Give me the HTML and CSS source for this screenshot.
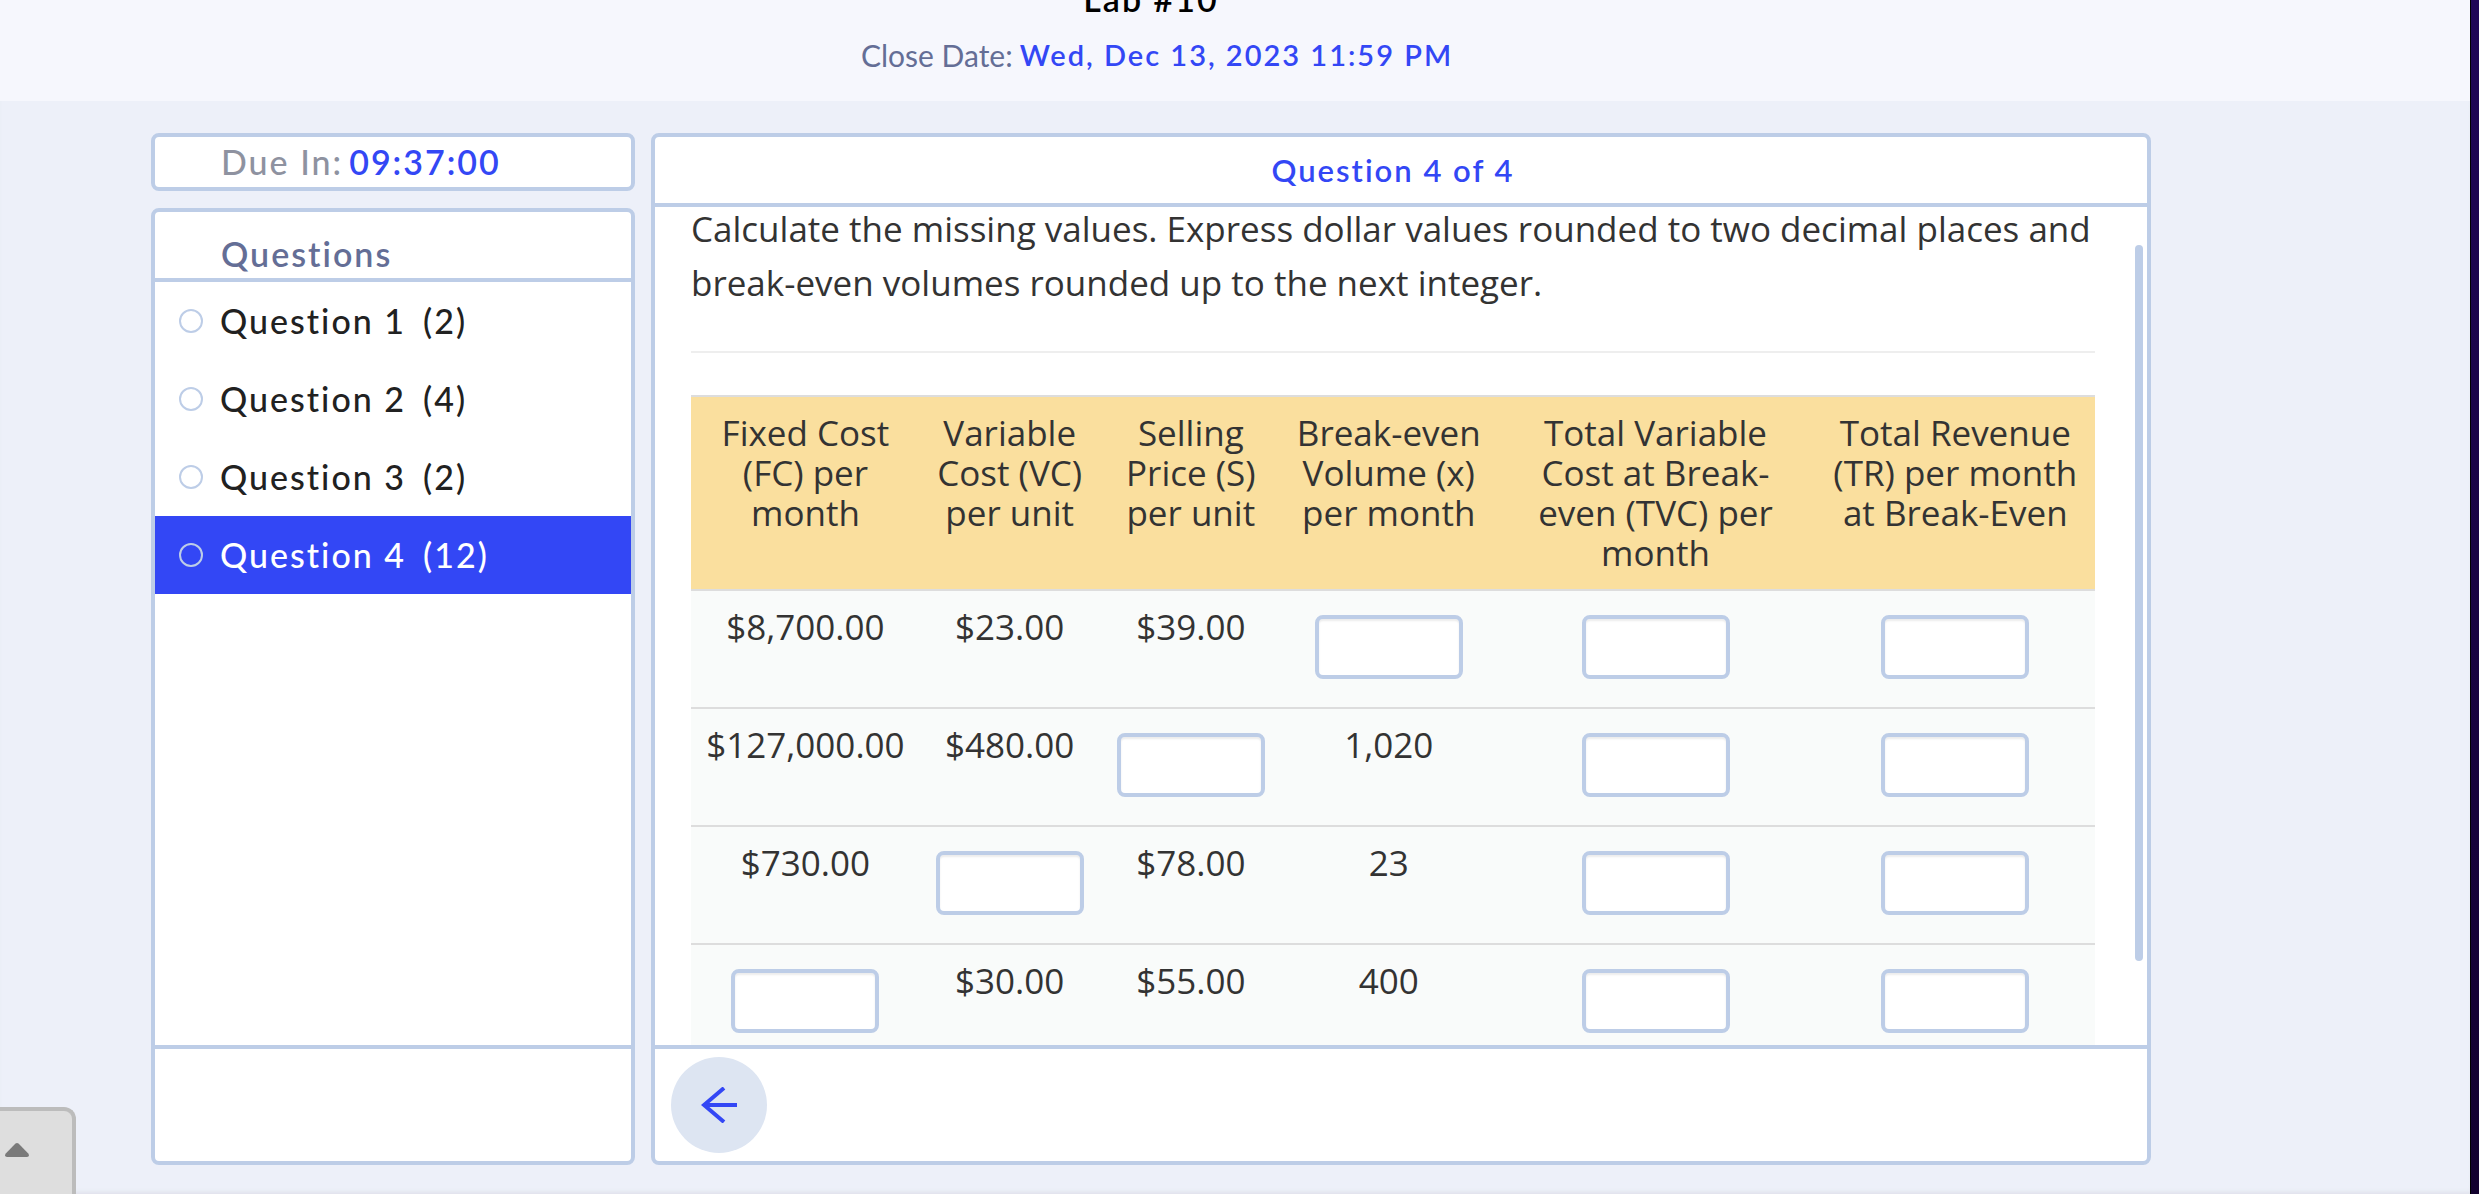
FILE: index.html
```html
<!DOCTYPE html>
<html lang="en">
<head>
<meta charset="utf-8">
<title>Lab #10</title>
<link rel="stylesheet" href="styles.css">
</head>

<body>
<div class="page">
	<header class="top">
		<h1>Lab #10</h1>
		<p class="close-date">Close Date: <span>Wed, Dec 13, 2023 11:59 PM</span></p>
	</header>

	<div class="content">
		<aside class="side">
			<div class="box due">Due In: <span>09:37:00</span></div>

			<nav class="box questions">
				<h2>Questions</h2>
				<ul>
					<li><a href="#q1"><i class="dot"></i><span>Question 1</span><span>(2)</span></a></li>
					<li><a href="#q2"><i class="dot"></i><span>Question 2</span><span>(4)</span></a></li>
					<li><a href="#q3"><i class="dot"></i><span>Question 3</span><span>(2)</span></a></li>
					<li><a href="#q4" class="active"><i class="dot"></i><span>Question 4</span><span>(12)</span></a></li>
				</ul>
				<div class="box-foot"></div>
			</nav>
		</aside>

		<main class="box question">
			<h2>Question 4 of 4</h2>
			<div class="scroll">
				<div class="scroll-content">
					<p class="task">Calculate the missing values. Express dollar values rounded to two decimal places and break-even volumes rounded up to the next integer.</p>
					<hr>
					<table>
						<colgroup>
							<col class="c-fc"><col class="c-vc"><col class="c-s"><col class="c-x"><col class="c-tvc"><col class="c-tr">
						</colgroup>
						<thead>
							<tr>
								<th>Fixed Cost (FC) per month</th>
								<th>Variable Cost (VC) per unit</th>
								<th>Selling Price (S) per unit</th>
								<th>Break-even Volume (x) per month</th>
								<th>Total Variable Cost at Break-even (TVC) per month</th>
								<th>Total Revenue (TR) per month at Break-Even</th>
							</tr>
						</thead>
						<tbody>
							<tr>
								<td>$8,700.00</td>
								<td>$23.00</td>
								<td>$39.00</td>
								<td><input type="text" aria-label="Row 1 break-even volume"></td>
								<td><input type="text" aria-label="Row 1 total variable cost"></td>
								<td><input type="text" aria-label="Row 1 total revenue"></td>
							</tr>
							<tr>
								<td>$127,000.00</td>
								<td>$480.00</td>
								<td><input type="text" aria-label="Row 2 selling price"></td>
								<td>1,020</td>
								<td><input type="text" aria-label="Row 2 total variable cost"></td>
								<td><input type="text" aria-label="Row 2 total revenue"></td>
							</tr>
							<tr>
								<td>$730.00</td>
								<td><input type="text" aria-label="Row 3 variable cost"></td>
								<td>$78.00</td>
								<td>23</td>
								<td><input type="text" aria-label="Row 3 total variable cost"></td>
								<td><input type="text" aria-label="Row 3 total revenue"></td>
							</tr>
							<tr>
								<td><input type="text" aria-label="Row 4 fixed cost"></td>
								<td>$30.00</td>
								<td>$55.00</td>
								<td>400</td>
								<td><input type="text" aria-label="Row 4 total variable cost"></td>
								<td><input type="text" aria-label="Row 4 total revenue"></td>
							</tr>
						</tbody>
					</table>
				</div>
				<div class="thumb"></div>
			</div>
			<div class="box-foot">
				<button type="button" class="back" aria-label="Previous question">
					<svg width="36" height="36" viewBox="0 0 36 36" fill="none" stroke="#3347f5" stroke-width="4">
						<path d="M36 18H3M23 1L3 18l20 17"/>
					</svg>
				</button>
			</div>
		</main>
	</div>

	<button type="button" class="tab" aria-label="Expand">
		<svg width="24" height="14" viewBox="0 0 24 14" fill="#7a7a7a">
			<path d="M10.500.6q1.500-1.200 3 0l10 10.200q1.300 3-1.500 3.200H2q-2.800-.2-1.500-3.200z"/>
		</svg>
	</button>
</div>
<!-- desktop behind the window -->
<div class="desktop"></div>
</body>
</html>
```

FILE: styles.css
```css
*{ margin:0; padding:0; box-sizing:border-box;}
ul{ list-style:none;}
a{ color:inherit; text-decoration:none;}

body{ display:flex; height:100vh; overflow:hidden; background:#edf0f9; font-family:Lato, sans-serif; font-size:34px;}

.page{ position:relative; flex:1; min-width:0; display:flex; flex-direction:column; box-shadow:inset 0 -4px 4px -2px #dfe1ea;}
.desktop{ width:9px; border-left:1px solid #000; background:linear-gradient(#1f0657, #12002e);}

.top{ height:101px; padding:0 319px 0 151px; background:#f6f7fd; text-align:center; display:flex; flex-direction:column; justify-content:flex-end;}
.top h1{ font-size:34px; line-height:40px; font-weight:600; letter-spacing:2px; color:#000;}
.close-date{ display:flex; justify-content:center; gap:7px; padding:18px 0 28px 12px; font-size:30px; line-height:36px; color:#646e96;}
.close-date span{ font-size:29px; color:#3347f5; font-weight:600; letter-spacing:2px;}

.content{ flex:1; min-height:0; display:flex; gap:16px; padding:32px 319px 29px 151px;}
.side{ width:484px; display:flex; flex-direction:column; gap:17px;}

.box{ background:#fff; border:4px solid #bdcde7; border-radius:8px;}
.box h2{ height:70px; border-bottom:4px solid #bdcde7; font-weight:600; letter-spacing:2px;}
.box-foot{ height:116px; border-top:4px solid #bdcde7; padding:8px 16px;}

.due{ display:flex; gap:6px; height:58px; padding-left:66px; line-height:50px; font-weight:500; letter-spacing:2px; color:#8e92a0;}
.due span{ color:#3347f5; font-weight:600;}

.questions{ flex:1; display:flex; flex-direction:column;}
.questions h2{ padding:20px 0 0 66px; font-size:34px; line-height:44px; color:#646e96;}
.questions ul{ flex:1;}
.questions a{ display:flex; align-items:center; gap:17px; height:78px; padding-left:24px; font-weight:500; line-height:40px; letter-spacing:2px; color:#212121;}
.questions .active{ background:#3347f5; color:#fff;}
.dot{ width:24px; height:24px; border:2px solid #bdcde7; border-radius:50%;}

.question{ flex:1; min-width:0; display:flex; flex-direction:column;}
.question h2{ padding-right:16px; font-size:31px; line-height:66px; text-align:center; color:#3347f5;}

.scroll{ flex:1; min-height:0; overflow:hidden; display:flex; gap:40px; padding:0 4px 0 36px;}
.scroll-content{ flex:1; min-width:0; margin-top:-5px; font-family:"Open Sans", sans-serif; font-size:35px; color:#333;}
.thumb{ width:8px; height:716px; margin-top:38px; border-radius:4px; background:#bdcde7;}

.task{ margin-right:-20px; line-height:54px;}
hr{ border:0; border-top:2px solid #eee; margin:41px 0 42px;}

table{ width:100%; border-collapse:separate; border-spacing:0; table-layout:fixed; line-height:40px; text-align:center;}
th, td{ padding:16px 14px; border-top:2px solid #ddd; vertical-align:top; font-weight:400;}
th{ background:#fadf9e;}
td{ height:118px; background:#f9fbfa;}
.c-fc{ width:16.3%;}
.c-vc{ width:12.8%;}
.c-s{ width:13%;}
.c-x{ width:15.2%;}
.c-tvc{ width:22.8%;}
.c-tr{ width:19.9%;}

td input{ display:block; width:148px; height:64px; margin:8px auto 0; padding:0 12px; border:4px solid #bdcde7; border-radius:8px; background:#fff; box-shadow:inset 0 2px 2px rgba(0,0,0,.08); font:inherit;}

.back{ display:flex; align-items:center; justify-content:center; width:96px; height:96px; border:0; border-radius:50%; background:#dde5f2;}

.tab{ position:absolute; left:0; bottom:0; display:flex; align-items:flex-start; width:76px; height:87px; padding:32px 0 0 5px; border:4px solid #bcbcbc; border-width:4px 4px 0 0; border-radius:0 12px 0 0; background:#dedede;}
```
